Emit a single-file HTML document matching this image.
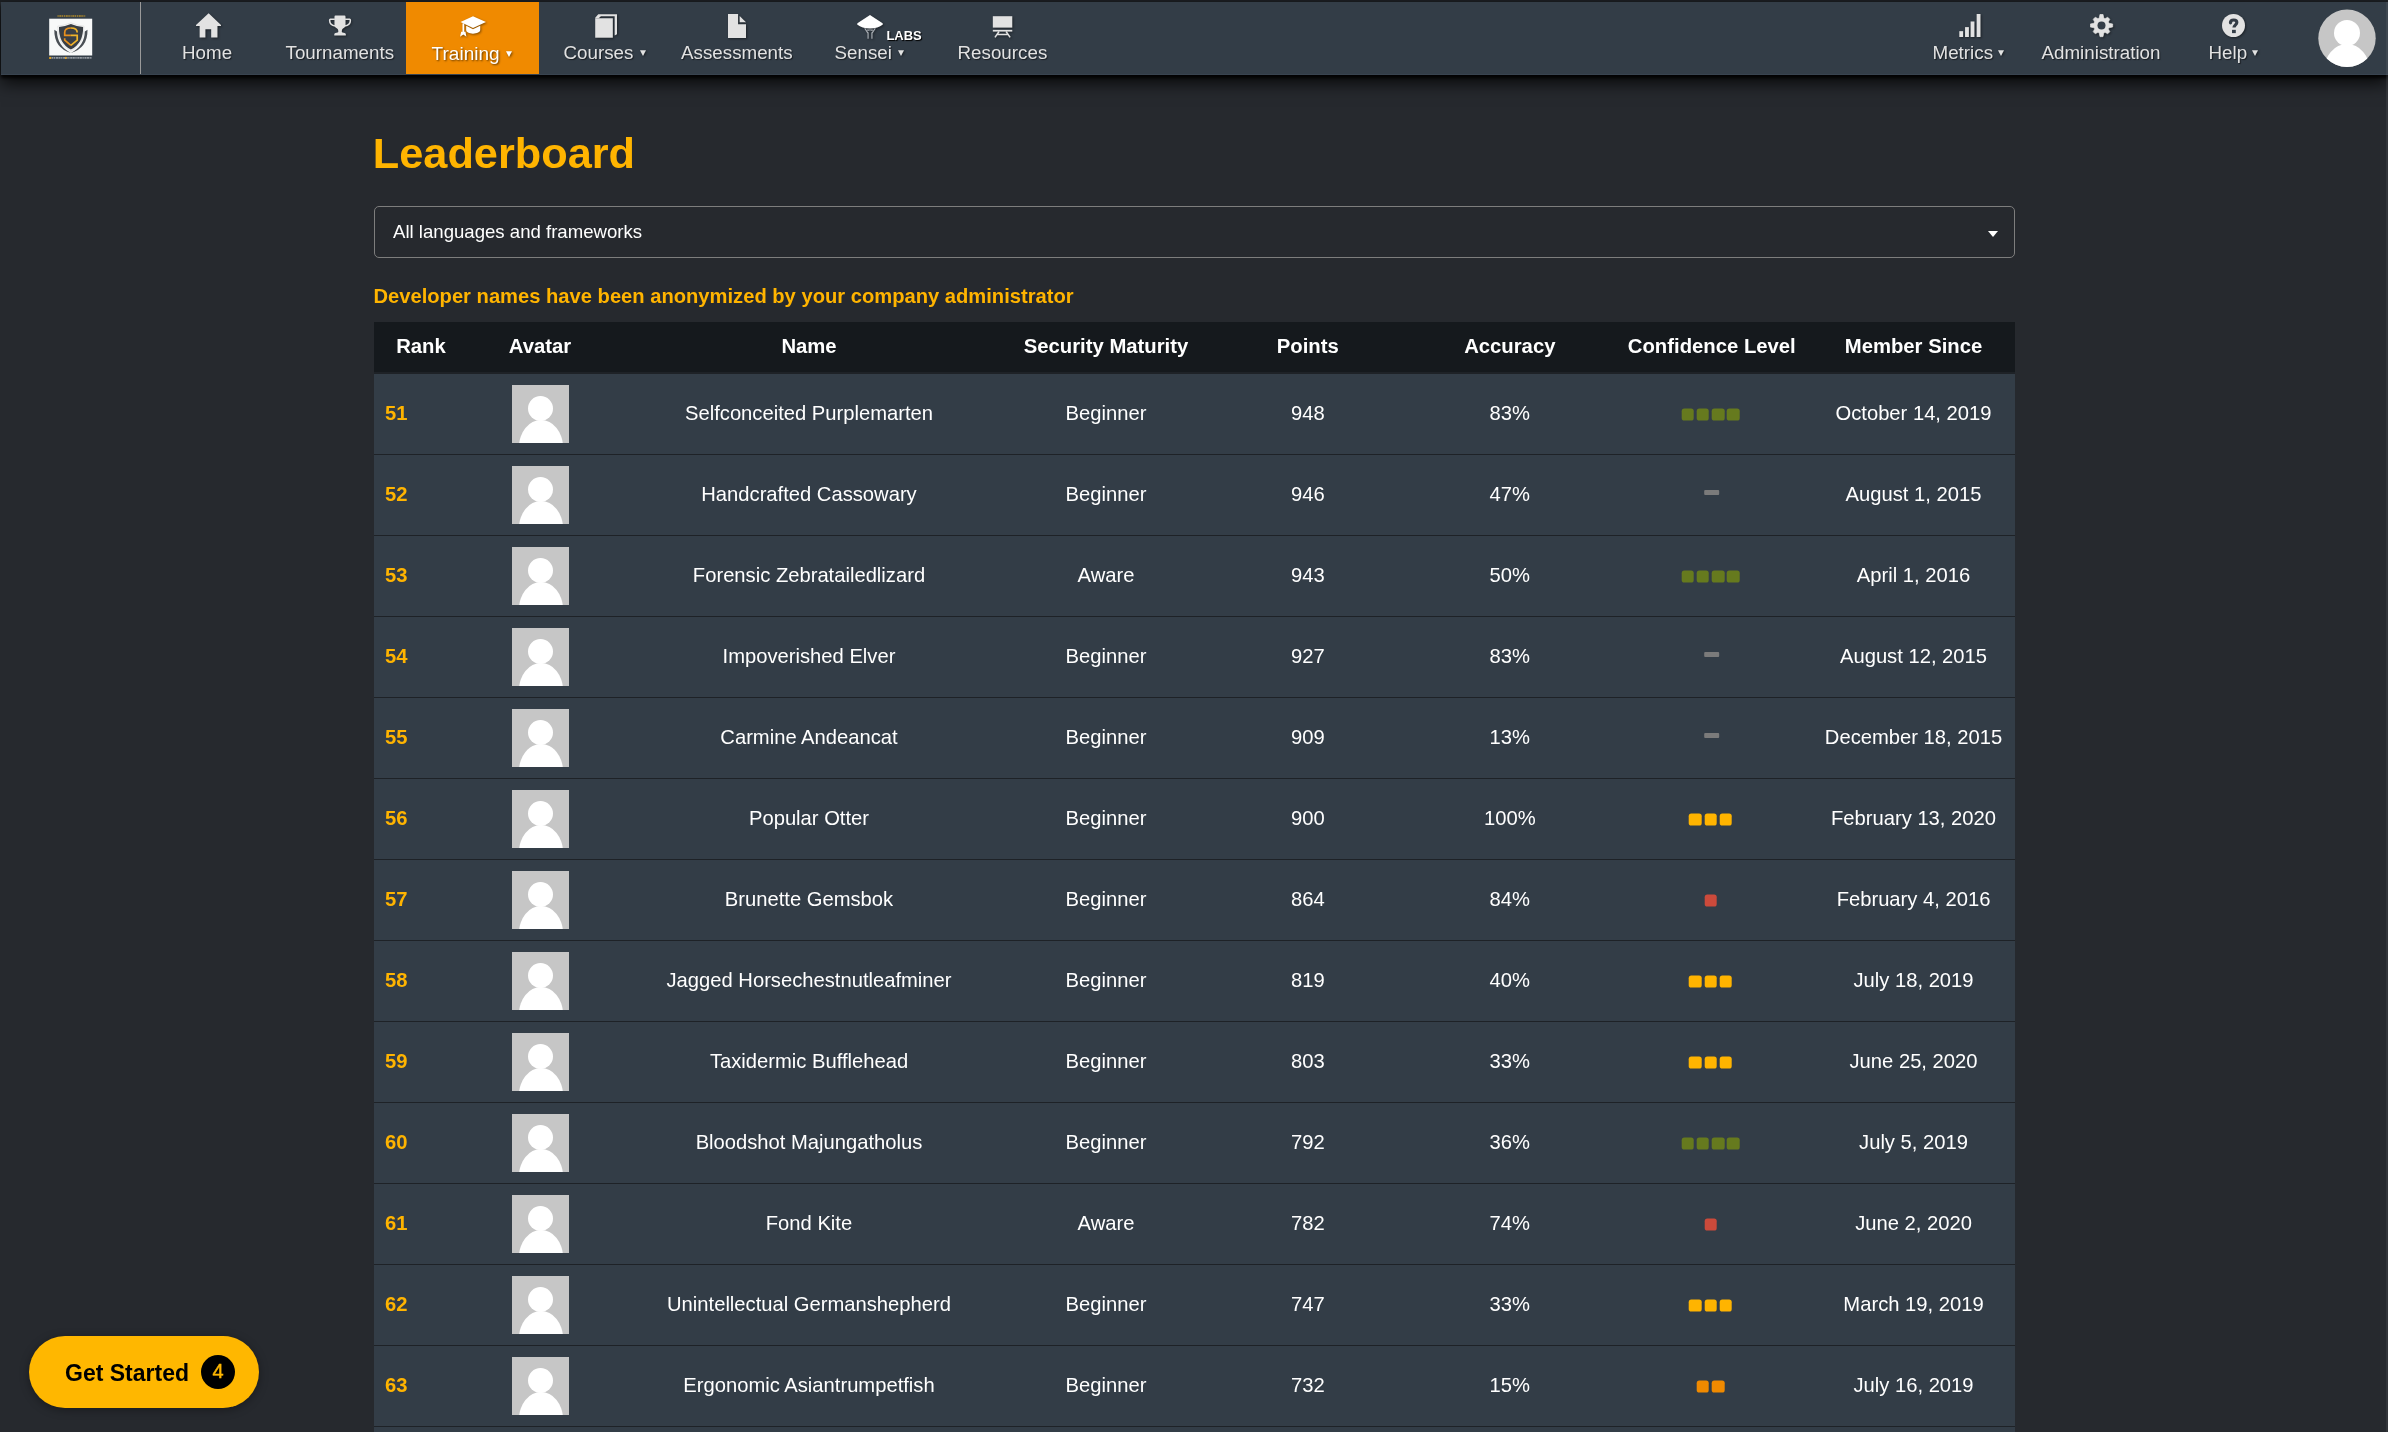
<!DOCTYPE html>
<html><head><meta charset="utf-8">
<style>
*{box-sizing:border-box;margin:0;padding:0}
html,body{width:2388px;height:1432px;overflow:hidden;background:#26292e;font-family:"Liberation Sans",sans-serif}
#wrap{position:absolute;left:0;top:0;width:2388px;height:1432px;will-change:transform}
.abs{position:absolute}
#topline{position:absolute;left:0;top:0;width:2388px;height:2px;background:#1c1f23}
#nav{position:absolute;left:1px;top:2px;width:2387px;height:73px;background:#333d47;box-shadow:inset 0 -1px 0 #394450,0 3px 3px rgba(0,0,0,.85),0 8px 16px rgba(0,0,0,.8)}
#rstrip{position:absolute;left:2386px;top:2px;width:2px;height:1430px;background:rgba(255,255,255,.06)}
.lbl{position:absolute;top:41px;height:24px;line-height:24px;font-size:18.8px;color:#e2e2e2;white-space:nowrap;text-shadow:1px 1px 1px rgba(0,0,0,.55)}
.car{display:inline-block;width:0;height:0;border-left:2.8px solid transparent;border-right:2.8px solid transparent;border-top:4.2px solid #e2e2e2;vertical-align:middle;margin-left:6px;position:relative;top:-1px}
.ico{position:absolute;overflow:visible}
.ico path,.ico rect,.ico circle{fill:#e2e2e2}
.sh{filter:drop-shadow(1px 1px 1px rgba(0,0,0,.45))}
h1{position:absolute;left:372.8px;top:125px;font-size:43.3px;line-height:56px;color:#ffb400;font-weight:bold}
#dd{position:absolute;left:374px;top:206px;width:1641px;height:52px;border:1px solid #7d7d7d;border-radius:5px;background:#26292e}
#dd span{position:absolute;left:18px;top:13px;font-size:18.6px;line-height:24px;color:#fff}
#dd i{position:absolute;left:1613px;top:24px;width:0;height:0;border-left:5.8px solid transparent;border-right:5.8px solid transparent;border-top:6px solid #fff}
#note{position:absolute;left:373.5px;top:283px;font-size:20.17px;line-height:26px;color:#ffb400;font-weight:bold;white-space:nowrap}
#tbl{position:absolute;left:374px;top:322px;width:1641px}
.hd{height:52px;background:#15191d;border-bottom:2px solid #1e2227;position:relative}
.hd .c{padding-bottom:1px}
.row{height:81px;background:#333d47;border-bottom:1px solid #1e2227;position:relative}
.c{position:absolute;top:0;height:100%;display:flex;align-items:center;justify-content:center;white-space:nowrap}
.hd .c{font-weight:bold;color:#fff;font-size:20.3px}
.row .c{font-size:20.2px;color:#fff;padding-bottom:2px}
.c1{left:0;width:94px}
.c2{left:94px;width:144px}
.c3{left:238px;width:394px}
.c4{left:632px;width:200px}
.c5{left:832.8px;width:202px}
.c6{left:1034.8px;width:202px}
.c7{left:1236.8px;width:202px}
.c8{left:1438px;width:203px}
.row .c1{justify-content:flex-start;padding-left:11px;color:#ffb400;font-weight:bold}
.av{width:57px;height:58px;background:#c6c6c6;position:relative;overflow:hidden;margin-left:1px;top:1px}
.av::before{content:"";position:absolute;left:15.5px;top:10.8px;width:25.4px;height:25.4px;border-radius:50%;background:#fff}
.av::after{content:"";position:absolute;left:6.5px;top:35px;width:44px;height:54px;border-radius:50%;background:#fff}
.sqw{display:flex;gap:2.8px;transform:translate(-1.3px,1.6px)}
.sq{display:block;width:12.5px;height:12.5px;border-radius:2.6px}
.g{background:#667a1e}.y{background:#ffb400}.o{background:#f08a00}.r{background:#cc4a3b}
.dash{display:block;width:15px;height:5px;background:#7b7b7b;border-radius:1px;transform:translate(0.2px,-2px)}
#gs{position:absolute;left:29px;top:1336px;width:230px;height:72px;border-radius:36px;background:#ffb700;box-shadow:0 2px 10px rgba(0,0,0,.35)}
#gs span{position:absolute;left:36px;top:23px;font-size:23px;line-height:28px;font-weight:bold;color:#000}
#gs b{position:absolute;left:172px;top:19px;width:34px;height:34px;border-radius:50%;background:#000;color:#ffb700;font-size:20px;line-height:33px;text-align:center;font-weight:normal;-webkit-text-stroke:.45px #ffb700}
</style></head><body><div id="wrap">
<div id="topline"></div>
<div id="nav"></div>
<div id="rstrip"></div>

<!-- logo -->
<svg class="ico" style="left:46px;top:13px" width="50" height="48" viewBox="0 0 50 48">
  <path d="M11.5 3 H39.5" style="fill:none;stroke:#d8a420;stroke-width:1.6;stroke-dasharray:1.2 .6 2 .5 1.5 .7;opacity:.75"/>
  <rect x="3.2" y="5.7" width="43" height="36.8" style="fill:#f8f9f9"/>
  <path d="M8.3 16.8 Q8 35 24.9 40 Q11.2 32.8 11 18.5 Z" style="fill:#4a4f55"/>
  <path d="M41.5 16.8 Q41.8 35 24.9 40 Q38.6 32.8 38.8 18.5 Z" style="fill:#4a4f55"/>
  <path d="M11.8 13.2 Q18.5 12.6 24.9 9.8 Q31.3 12.6 38 13.2 Q38.4 31 24.9 38 Q11.4 31 11.8 13.2 Z" style="fill:#fafafa;stroke:#d9d9d9;stroke-width:.6"/>
  <path d="M13 13.9 Q19 13.5 24.9 11.1 Q30.8 13.5 37.1 13.9 Q37.5 30 24.9 36.6 Q12.5 30 13 13.9 Z" style="fill:#3a3f45"/>
  <path d="M24.9 15 Q18.7 15 18.7 19.6 V22.4 H24.9 M18.7 25.2 V27.2 L24.9 32.4" style="fill:none;stroke:#e8901e;stroke-width:1.7"/><path d="M24.9 15 Q31.2 15 31.2 19.4 M24.9 22.4 H31.2 V27.2 L24.9 32.4" style="fill:none;stroke:#f0b42a;stroke-width:1.7"/>
  <path d="M5.5 44.9 H46" style="fill:none;stroke:#b9bec3;stroke-width:1.7;stroke-dasharray:2 .5 1.4 .6 2.2 .4;opacity:.7"/>
  <rect x="3.2" y="43.9" width="2" height="2.1" style="fill:#e0a020"/>
  <rect x="19" y="43.9" width="1.5" height="2.1" style="fill:#e0a020"/>
</svg>
<div class="abs" style="left:140px;top:2px;width:1px;height:72px;background:#9a9a9a"></div>

<!-- Training active -->
<div class="abs" style="left:406px;top:2px;width:133px;height:72px;background:#f08a00"></div>

<!-- icons -->
<svg class="ico sh" style="left:195.9px;top:13.1px" width="25" height="25" viewBox="0 0 24.7 24"><path d="M12.5 0 L24.7 11.6 V12.5 H21.2 V23.9 H15 V15.8 H9.3 V23.9 H3.6 V12.5 H0 V11.6 Z"/></svg>
<svg class="ico sh" style="left:328.8px;top:14.7px" width="22" height="21" viewBox="0 0 21.7 20.3"><path d="M6.4 0.4 H15.3 Q16.3 0.4 16.3 1.4 V9.5 Q16.3 12.2 13.2 13.6 Q12.6 14.5 12.6 16.5 Q12.6 17.2 15.4 17.5 Q16.6 17.7 16.6 18.9 V20 H5.2 V18.9 Q5.2 17.7 6.4 17.5 Q9.2 17.2 9.2 16.5 Q9.2 14.5 8.6 13.6 Q5.4 12.2 5.4 9.5 V1.4 Q5.4 0.4 6.4 0.4 Z"/><path d="M5.8 4 H1.3 Q0.7 4 0.7 4.8 V5.6 Q0.7 9.6 6.2 10.6 M15.9 4 H20.4 Q21 4 21 4.8 V5.6 Q21 9.6 15.5 10.6" style="fill:none;stroke:#e2e2e2;stroke-width:1.5"/></svg>
<svg class="ico sh" style="left:460px;top:16px" width="26" height="21" viewBox="0 0 25.2 20.1"><path d="M0.5 5.6 L12.6 0 L25.2 5.8 L12.6 11.4 Z" style="fill:#fff"/><path d="M6 9.4 L12.6 12.6 L19.6 9.4 V13.5 C19.6 15.5 16.5 17 12.6 17 C8.7 17 6 15.5 6 13.5 Z" style="fill:#fff"/><rect x="2.4" y="7" width="1.7" height="9" style="fill:#fff"/><path d="M0 20.1 L1.2 15.2 H5.3 L6.2 20.1 L3.2 17.8 Z" style="fill:#fff"/></svg>
<svg class="ico sh" style="left:594.8px;top:13.9px" width="22" height="24" viewBox="0 0 21.6 23"><path d="M0.2 3.3 L3.2 0 H21.6 V19.6 L19.3 20.9 V2 H5.8 L3.6 3.9 H0.2 Z"/><rect x="0.2" y="3.9" width="17.3" height="19.1"/></svg>
<svg class="ico sh" style="left:727.7px;top:14px" width="18" height="24" viewBox="0 0 17.3 23"><path d="M0 0 H9.7 V9.7 H17.3 V23 H0 Z"/><path d="M11.2 1.8 L17.3 7.9 H11.2 Z"/></svg>
<svg class="ico sh" style="left:856.7px;top:14.7px" width="26" height="24" viewBox="0 0 25.6 23.5"><path d="M12.8 0 L25.2 8 Q25.7 8.9 25.1 9.6 Q21 13.2 12.8 13.2 Q4.6 13.2 0.5 9.6 Q-0.1 8.9 0.4 8 Z" style="fill:#fff"/><path d="M7.6 13 L10.6 17.6 M18 13 L15 17.6 M10.9 16.8 V23.2 M14.7 16.8 V23.2 M10 14.9 H15.6" style="fill:none;stroke:#a9aeb4;stroke-width:1.15"/><path d="M11.6 16.3 L12.8 14.8 L14 16.3 Z" style="fill:#333d47"/></svg>
<div class="abs" style="left:886.4px;top:28px;font-size:13px;line-height:16px;font-weight:bold;color:#fff;text-shadow:1px 1px 1px #000">LABS</div>
<svg class="ico sh" style="left:992.3px;top:15.7px" width="21" height="22" viewBox="0 0 20 21.6"><rect x="0.5" y="0.2" width="19.1" height="11.2"/><rect x="0.5" y="13.6" width="19.1" height="1.7"/><path d="M6.6 15.2 L2.6 21 M13.5 15.2 L17.5 21 M4.6 18.2 H15.5" style="fill:none;stroke:#e2e2e2;stroke-width:1.5"/></svg>

<svg class="ico sh" style="left:1958.8px;top:14.1px" width="22" height="23" viewBox="0 0 21.2 22.8"><rect x="0" y="17" width="3.8" height="5.8"/><rect x="5.7" y="13" width="3.8" height="9.8"/><rect x="11.2" y="7.4" width="3.8" height="15.4"/><rect x="17.2" y="0" width="3.8" height="22.8"/></svg>
<svg class="ico sh" style="left:2089.8px;top:14.2px" width="23" height="23" viewBox="0 0 22.4 22.4"><path d="M13.70 4.70 L12.65 0.30 L9.75 0.30 L8.70 4.70Z M17.56 8.37 L19.30 5.15 L17.25 3.10 L14.03 4.84Z M17.70 13.70 L22.10 12.65 L22.10 9.75 L17.70 8.70Z M14.03 17.56 L17.25 19.30 L19.30 17.25 L17.56 14.03Z M8.70 17.70 L9.75 22.10 L12.65 22.10 L13.70 17.70Z M4.84 14.03 L3.10 17.25 L5.15 19.30 L8.37 17.56Z M4.70 8.70 L0.30 9.75 L0.30 12.65 L4.70 13.70Z M8.37 4.84 L5.15 3.10 L3.10 5.15 L4.84 8.37Z" style="stroke:#e2e2e2;stroke-width:.6;stroke-linejoin:round"/><circle cx="11.2" cy="11.2" r="7.6"/><circle cx="11.2" cy="11.2" r="3.9" style="fill:#333d47"/></svg>
<svg class="ico sh" style="left:2222px;top:14.1px" width="23" height="23" viewBox="0 0 22.5 22.5"><circle cx="11.25" cy="11.25" r="11.25"/><path d="M8.3 8.6 C8.3 6.6 9.8 5.9 11.5 5.9 C13.3 5.9 14.5 6.9 14.5 8.3 C14.5 10.5 11.7 10.7 11.7 13.3" style="fill:none;stroke:#343c46;stroke-width:3.1"/><circle cx="8.3" cy="8.6" r="1.55" style="fill:#333d47"/><rect x="9.8" y="15.5" width="3.7" height="3.2" style="fill:#333d47"/></svg>

<!-- avatar top right -->
<svg class="ico" style="left:2318px;top:9.4px" width="58" height="58" viewBox="0 0 58 58"><defs><clipPath id="cc"><circle cx="29" cy="29.2" r="28.7"/></clipPath></defs><circle cx="29" cy="29.2" r="28.7" style="fill:#c6c6c6"/><g clip-path="url(#cc)"><circle cx="29" cy="24" r="13" style="fill:#fff"/><ellipse cx="29" cy="62" rx="23" ry="27" style="fill:#fff"/></g></svg>

<!-- labels -->
<div class="lbl" style="left:182px">Home</div>
<div class="lbl" style="left:285.5px">Tournaments</div>
<div class="lbl" style="left:431.6px;color:#fff;top:42px;font-size:19.05px;text-shadow:1px 1px 2px rgba(0,0,0,.6)">Training</div>
<div class="lbl" style="left:563.5px">Courses</div>
<div class="lbl" style="left:681px">Assessments</div>
<div class="lbl" style="left:834.5px">Sensei</div>
<div class="lbl" style="left:957.5px">Resources</div>
<div class="lbl" style="left:1932.5px">Metrics</div>
<div class="lbl" style="left:2041.5px">Administration</div>
<div class="lbl" style="left:2208.5px">Help</div>
<svg class="ico" style="left:506.2px;top:51.1px;filter:drop-shadow(1px 1px 1px rgba(0,0,0,.5))" width="6" height="6" viewBox="0 0 5.6 5.3"><path d="M0 0 H5.6 L3.1 5.1 Q2.8 5.5 2.5 5.1 Z" style="fill:#fff"/></svg>
<svg class="ico" style="left:639.5px;top:50.1px;filter:drop-shadow(1px 1px 1px rgba(0,0,0,.5))" width="6" height="6" viewBox="0 0 5.6 5.3"><path d="M0 0 H5.6 L3.1 5.1 Q2.8 5.5 2.5 5.1 Z" style="fill:#e2e2e2"/></svg>
<svg class="ico" style="left:898.2px;top:50.1px;filter:drop-shadow(1px 1px 1px rgba(0,0,0,.5))" width="6" height="6" viewBox="0 0 5.6 5.3"><path d="M0 0 H5.6 L3.1 5.1 Q2.8 5.5 2.5 5.1 Z" style="fill:#e2e2e2"/></svg>
<svg class="ico" style="left:1998.4px;top:50.1px;filter:drop-shadow(1px 1px 1px rgba(0,0,0,.5))" width="6" height="6" viewBox="0 0 5.6 5.3"><path d="M0 0 H5.6 L3.1 5.1 Q2.8 5.5 2.5 5.1 Z" style="fill:#e2e2e2"/></svg>
<svg class="ico" style="left:2251.6px;top:50.1px;filter:drop-shadow(1px 1px 1px rgba(0,0,0,.5))" width="6" height="6" viewBox="0 0 5.6 5.3"><path d="M0 0 H5.6 L3.1 5.1 Q2.8 5.5 2.5 5.1 Z" style="fill:#e2e2e2"/></svg>

<h1>Leaderboard</h1>
<div id="dd"><span>All languages and frameworks</span><i></i></div>
<div id="note">Developer names have been anonymized by your company administrator</div>

<div id="tbl">
<div class="hd"><div class="c c1">Rank</div><div class="c c2">Avatar</div><div class="c c3">Name</div><div class="c c4">Security Maturity</div><div class="c c5">Points</div><div class="c c6">Accuracy</div><div class="c c7">Confidence Level</div><div class="c c8">Member Since</div></div>
<!--ROWS-->
<div class="row"><div class="c c1">51</div><div class="c c2"><div class="av"></div></div><div class="c c3">Selfconceited Purplemarten</div><div class="c c4">Beginner</div><div class="c c5">948</div><div class="c c6">83%</div><div class="c c7"><div class="sqw"><i class="sq g"></i><i class="sq g"></i><i class="sq g"></i><i class="sq g"></i></div></div><div class="c c8">October 14, 2019</div></div>
<div class="row"><div class="c c1">52</div><div class="c c2"><div class="av"></div></div><div class="c c3">Handcrafted Cassowary</div><div class="c c4">Beginner</div><div class="c c5">946</div><div class="c c6">47%</div><div class="c c7"><i class="dash"></i></div><div class="c c8">August 1, 2015</div></div>
<div class="row"><div class="c c1">53</div><div class="c c2"><div class="av"></div></div><div class="c c3">Forensic Zebratailedlizard</div><div class="c c4">Aware</div><div class="c c5">943</div><div class="c c6">50%</div><div class="c c7"><div class="sqw"><i class="sq g"></i><i class="sq g"></i><i class="sq g"></i><i class="sq g"></i></div></div><div class="c c8">April 1, 2016</div></div>
<div class="row"><div class="c c1">54</div><div class="c c2"><div class="av"></div></div><div class="c c3">Impoverished Elver</div><div class="c c4">Beginner</div><div class="c c5">927</div><div class="c c6">83%</div><div class="c c7"><i class="dash"></i></div><div class="c c8">August 12, 2015</div></div>
<div class="row"><div class="c c1">55</div><div class="c c2"><div class="av"></div></div><div class="c c3">Carmine Andeancat</div><div class="c c4">Beginner</div><div class="c c5">909</div><div class="c c6">13%</div><div class="c c7"><i class="dash"></i></div><div class="c c8">December 18, 2015</div></div>
<div class="row"><div class="c c1">56</div><div class="c c2"><div class="av"></div></div><div class="c c3">Popular Otter</div><div class="c c4">Beginner</div><div class="c c5">900</div><div class="c c6">100%</div><div class="c c7"><div class="sqw"><i class="sq y"></i><i class="sq y"></i><i class="sq y"></i></div></div><div class="c c8">February 13, 2020</div></div>
<div class="row"><div class="c c1">57</div><div class="c c2"><div class="av"></div></div><div class="c c3">Brunette Gemsbok</div><div class="c c4">Beginner</div><div class="c c5">864</div><div class="c c6">84%</div><div class="c c7"><div class="sqw"><i class="sq r"></i></div></div><div class="c c8">February 4, 2016</div></div>
<div class="row"><div class="c c1">58</div><div class="c c2"><div class="av"></div></div><div class="c c3">Jagged Horsechestnutleafminer</div><div class="c c4">Beginner</div><div class="c c5">819</div><div class="c c6">40%</div><div class="c c7"><div class="sqw"><i class="sq y"></i><i class="sq y"></i><i class="sq y"></i></div></div><div class="c c8">July 18, 2019</div></div>
<div class="row"><div class="c c1">59</div><div class="c c2"><div class="av"></div></div><div class="c c3">Taxidermic Bufflehead</div><div class="c c4">Beginner</div><div class="c c5">803</div><div class="c c6">33%</div><div class="c c7"><div class="sqw"><i class="sq y"></i><i class="sq y"></i><i class="sq y"></i></div></div><div class="c c8">June 25, 2020</div></div>
<div class="row"><div class="c c1">60</div><div class="c c2"><div class="av"></div></div><div class="c c3">Bloodshot Majungatholus</div><div class="c c4">Beginner</div><div class="c c5">792</div><div class="c c6">36%</div><div class="c c7"><div class="sqw"><i class="sq g"></i><i class="sq g"></i><i class="sq g"></i><i class="sq g"></i></div></div><div class="c c8">July 5, 2019</div></div>
<div class="row"><div class="c c1">61</div><div class="c c2"><div class="av"></div></div><div class="c c3">Fond Kite</div><div class="c c4">Aware</div><div class="c c5">782</div><div class="c c6">74%</div><div class="c c7"><div class="sqw"><i class="sq r"></i></div></div><div class="c c8">June 2, 2020</div></div>
<div class="row"><div class="c c1">62</div><div class="c c2"><div class="av"></div></div><div class="c c3">Unintellectual Germanshepherd</div><div class="c c4">Beginner</div><div class="c c5">747</div><div class="c c6">33%</div><div class="c c7"><div class="sqw"><i class="sq y"></i><i class="sq y"></i><i class="sq y"></i></div></div><div class="c c8">March 19, 2019</div></div>
<div class="row"><div class="c c1">63</div><div class="c c2"><div class="av"></div></div><div class="c c3">Ergonomic Asiantrumpetfish</div><div class="c c4">Beginner</div><div class="c c5">732</div><div class="c c6">15%</div><div class="c c7"><div class="sqw"><i class="sq o"></i><i class="sq o"></i></div></div><div class="c c8">July 16, 2019</div></div>
<div class="row"><div class="c c1"></div><div class="c c2"></div><div class="c c3"></div><div class="c c4"></div><div class="c c5"></div><div class="c c6"></div><div class="c c7"></div><div class="c c8"></div></div>
</div>

<div id="gs"><span>Get Started</span><b>4</b></div>
</div></body></html>
